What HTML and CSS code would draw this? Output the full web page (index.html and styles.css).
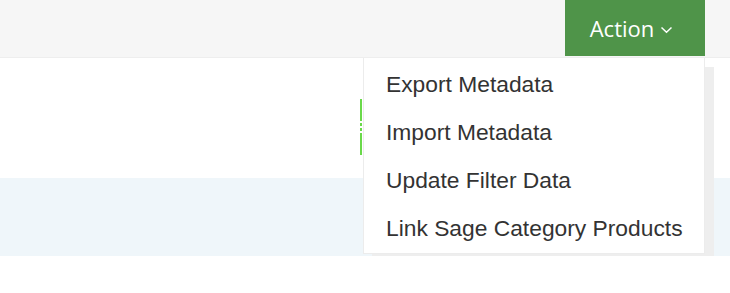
FILE: index.html
```html
<!DOCTYPE html>
<html lang="en">

<head>
    <meta charset="utf-8">
    <meta name="viewport" content="width=device-width, initial-scale=1.0">
    <title>Action</title>
    <link rel="stylesheet" href="styles.css">
</head>

<body>
    <header class="topbar">
        <div class="handling">
            <button class="knap">Action
                <svg class="pil" width="13" height="8" viewBox="0 0 13 8">
                    <path d="M1.5 1.5 L6.5 6.2 L11.5 1.5" fill="none" stroke="#fff" stroke-width="1.5" />
                </svg>
            </button>
            <ul class="menu">
                <li>Export Metadata</li>
                <li>Import Metadata</li>
                <li>Update Filter Data</li>
                <li>Link Sage Category Products</li>
            </ul>
        </div>
    </header>

    <main>
        <section class="felt">
            <div class="markering">
                <span></span><span class="kort"></span><span class="kort"></span><span></span>
            </div>
        </section>
        <section class="band"></section>
    </main>
</body>

</html>
```

FILE: styles.css
```css
body {
    margin: 0;
    font-family: "Liberation Sans", Arial, sans-serif;
    background: #fff;
}

.topbar {
    height: 57px;
    background-color: #f6f6f6;
    border-bottom: 1px solid #eeeeee;
    display: flex;
    justify-content: flex-end;
    padding-right: 25px;
}

.handling {
    position: relative;
}

.knap {
    width: 140px;
    height: 56px;
    border: 0;
    margin: 0;
    padding: 0 7px 0 0;
    background-color: #4f9449;
    color: #fff;
    font-family: "Open Sans", sans-serif;
    font-size: 22px;
    display: flex;
    align-items: center;
    justify-content: center;
    gap: 6px;
}

.pil {
    margin-top: 3px;
}

.menu {
    position: absolute;
    top: 58px;
    right: 0;
    width: 340px;
    margin: 0;
    padding: 2px 0 1px;
    list-style: none;
    background: #fff;
    border: 1px solid #ececec;
    border-top: 0;
    box-shadow: 9px 9px 0 #eeeeee;
    z-index: 2;
}

.menu li {
    height: 48px;
    line-height: 48px;
    padding-left: 22px;
    font-size: 22.8px;
    color: #333;
}

.felt {
    height: 120px;
    position: relative;
}

.markering {
    position: absolute;
    left: 360px;
    top: 41px;
    width: 6px;
    display: flex;
    flex-direction: column;
    gap: 2px;
}

.markering span {
    display: block;
    height: 22px;
    border-left: 2px solid #6ad94a;
    border-right: 2px solid #6ad94a;
}

.markering .kort {
    height: 3px;
}

.band {
    height: 78px;
    background-color: #eff6fa;
}
```
